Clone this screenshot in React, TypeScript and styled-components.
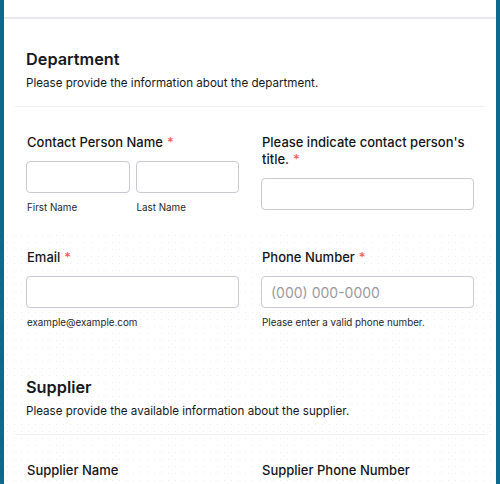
import React from 'react'
import styled, { createGlobalStyle } from 'styled-components'

const GlobalStyle = createGlobalStyle`
  html, body {
    margin: 0;
    padding: 0;
    background: #ffffff;
  }
  body {
    font-family: Inter, "Noto Sans", "Liberation Sans", sans-serif;
    color: #1f2328;
  }
  * {
    box-sizing: border-box;
  }
`

const Frame = styled.div`
  width: 500px;
  height: 484px;
  overflow: hidden;
  background: #ffffff;
  border-left: 4px solid #0c6a90;
  border-right: 4px solid #0c6a90;
`

const TopBar = styled.div`
  height: 19px;
  border-bottom: 2px solid #e8e9ec;
`

const PatternArea = styled.div`
  background-image: radial-gradient(#ececef 0.7px, transparent 0.9px);
  background-size: 7px 7px;
`

const SectionHeader = styled.div`
  padding: 29px 22px 14px;
`

const Title = styled.h2`
  margin: 0 0 4px;
  font-size: 16.3px;
  line-height: 22px;
  font-weight: 600;
  color: #17191c;
`

const Description = styled.p`
  margin: 0;
  font-size: 11.6px;
  line-height: 18px;
  font-weight: 400;
  color: #16181b;
`

const Divider = styled.hr`
  margin: 0 11px;
  border: 0;
  border-top: 1px solid #f0f0f2;
`

const Fields = styled.div`
  padding-top: 10px;
`

const FieldRow = styled.div`
  display: grid;
  grid-template-columns: 213px 213px;
  column-gap: 22px;
  padding: 17px 22px;
  align-items: start;
`

const Field = styled.div`
  display: flex;
  flex-direction: column;
`

const Label = styled.label<{ $required?: boolean }>`
  display: block;
  margin: 0 0 10px 1px;
  font-size: 13px;
  line-height: 17px;
  font-weight: 500;
  color: #141619;
  &::after {
    content: ${({ $required }) => ($required ? "'*'" : "''")};
    color: #f45b5b;
    margin-left: 4px;
  }
`

const Inputs = styled.div<{ $split?: boolean }>`
  display: grid;
  grid-template-columns: ${({ $split }) => ($split ? '1fr 1fr' : '1fr')};
  column-gap: 6px;
`

const InputGroup = styled.div`
  display: flex;
  flex-direction: column;
`

const TextInput = styled.input`
  width: 100%;
  height: 32px;
  padding: 0 9px;
  border: 1px solid #c9cad2;
  border-radius: 4px;
  background: #ffffff;
  font-family: Inter, "Noto Sans", "Liberation Sans", sans-serif;
  font-size: 14px;
  color: #1f2328;
  outline: none;
  &::placeholder {
    color: #9a9ba2;
  }
`

const SubLabel = styled.span`
  margin-top: 8px;
  margin-left: 1px;
  font-size: 9.8px;
  line-height: 14px;
  color: #24272d;
`

type SectionProps = { title: string; description: string }

const Section = ({ title, description }: SectionProps) => (
  <>
    <SectionHeader>
      <Title>{title}</Title>
      <Description>{description}</Description>
    </SectionHeader>
    <Divider />
  </>
)

const App = () => {
  return (
    <>
      <GlobalStyle />
      <Frame>
        <TopBar />
        <Section title="Department" description="Please provide the information about the department." />
        <Fields>
          <FieldRow>
            <Field>
              <Label $required>Contact Person Name</Label>
              <Inputs $split>
                <InputGroup>
                  <TextInput type="text" />
                  <SubLabel>First Name</SubLabel>
                </InputGroup>
                <InputGroup>
                  <TextInput type="text" />
                  <SubLabel>Last Name</SubLabel>
                </InputGroup>
              </Inputs>
            </Field>
            <Field>
              <Label $required>Please indicate contact person's title.</Label>
              <Inputs>
                <TextInput type="text" />
              </Inputs>
            </Field>
          </FieldRow>
        </Fields>
        <PatternArea>
          <FieldRow>
            <Field>
              <Label $required>Email</Label>
              <InputGroup>
                <TextInput type="email" />
                <SubLabel>example@example.com</SubLabel>
              </InputGroup>
            </Field>
            <Field>
              <Label $required>Phone Number</Label>
              <InputGroup>
                <TextInput type="tel" placeholder="(000) 000-0000" />
                <SubLabel>Please enter a valid phone number.</SubLabel>
              </InputGroup>
            </Field>
          </FieldRow>
          <Section title="Supplier" description="Please provide the available information about the supplier." />
          <Fields>
            <FieldRow>
              <Field>
                <Label>Supplier Name</Label>
              </Field>
              <Field>
                <Label>Supplier Phone Number</Label>
              </Field>
            </FieldRow>
          </Fields>
        </PatternArea>
      </Frame>
    </>
  )
}

export default App
